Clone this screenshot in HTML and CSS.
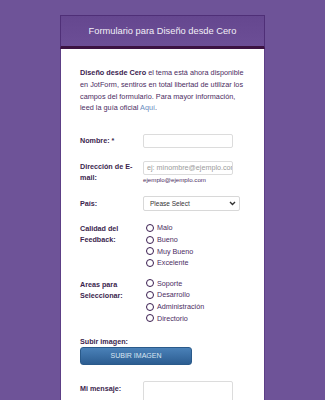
FILE: index.html
```html
<!DOCTYPE html>
<html lang="es">
<head>
    <meta charset="UTF-8">
    <meta name="viewport" content="width=device-width, initial-scale=1.0">
    <title>Formulario para Diseño desde Cero</title>
    <link rel="stylesheet" href="styles.css">
</head>
<body>

    <div class="card">
        <div class="card-header">Formulario para Diseño desde Cero</div>

        <div class="card-body">
            <p class="intro"><b>Diseño desde Cero</b> el tema está ahora disponible en JotForm, sentiros en total libertad de utilizar los campos del formulario. Para mayor información, leed la guía oficial <a href="#">Aquí</a>.</p>

            <div class="row row-name">
                <label class="label">Nombre: *</label>
                <div class="field"><div class="input"></div></div>
            </div>

            <div class="row row-email">
                <label class="label">Dirección de E-mail:</label>
                <div class="field">
                    <div class="input placeholder">ej: minombre@ejemplo.com</div>
                    <div class="hint">ejemplo@ejemplo.com</div>
                </div>
            </div>

            <div class="row row-country">
                <label class="label">País:</label>
                <div class="field">
                    <div class="select">
                        <span>Please Select</span>
                        <svg width="7" height="5" viewBox="0 0 7 5"><path d="M1 1 L3.5 3.5 L6 1" fill="none" stroke="#333" stroke-width="1.4"/></svg>
                    </div>
                </div>
            </div>

            <div class="row row-feedback">
                <label class="label">Calidad del Feedback:</label>
                <div class="field options">
                    <div class="option"><span class="radio"></span>Malo</div>
                    <div class="option"><span class="radio"></span>Bueno</div>
                    <div class="option"><span class="radio"></span>Muy Bueno</div>
                    <div class="option"><span class="radio"></span>Excelente</div>
                </div>
            </div>

            <div class="row row-areas">
                <label class="label">Areas para Seleccionar:</label>
                <div class="field options">
                    <div class="option"><span class="radio"></span>Soporte</div>
                    <div class="option"><span class="radio"></span>Desarrollo</div>
                    <div class="option"><span class="radio"></span>Administración</div>
                    <div class="option"><span class="radio"></span>Directorio</div>
                </div>
            </div>

            <div class="upload">
                <label class="label">Subir imagen:</label>
                <button class="upload-btn">SUBIR IMAGEN</button>
            </div>

            <div class="row row-message">
                <label class="label">Mi mensaje:</label>
                <div class="field"><div class="textarea"></div></div>
            </div>
        </div>
    </div>

</body>
</html>
```

FILE: styles.css
```css
body {
    margin: 0;
    padding: 15px 0 0;
    background-color: #6e5398;
    font-family: "Liberation Sans", Arial, sans-serif;
    color: #4a2d5e;
    height: 400px;
    overflow: hidden;
}

.card {
    width: 203px;
    margin: 0 auto;
    border-left: 1px solid #5d3f86;
    border-right: 1px solid #5d3f86;
    background-color: #fff;
    height: 400px;
}

.card-header {
    height: 30px;
    line-height: 31px;
    margin: 0 -1px;
    border: 1px solid #4f2f77;
    border-bottom: 3px solid #3c1242;
    background: linear-gradient(#65478f, #6c4e96);
    color: #f2eef7;
    font-size: 9.3px;
    text-align: center;
}

.card-body {
    padding: 18px 16px 0 19px;
}

.intro {
    margin: 0;
    font-size: 7.3px;
    line-height: 11.8px;
    color: #4b2c5f;
}

.intro b {
    color: #3c1c50;
}

.intro a {
    color: #6a8ec0;
    text-decoration: none;
}

.row {
    display: flex;
}

.label {
    width: 63px;
    flex-shrink: 0;
    font-size: 7.2px;
    font-weight: bold;
    line-height: 11px;
    color: #3c1f4e;
}

.field {
    flex: 1;
}

.row-name {
    margin-top: 20px;
}

.row-name .label {
    padding-top: 1px;
}

.row-email {
    margin-top: 13px;
}

.row-country {
    margin-top: 13px;
}

.row-country .label {
    padding-top: 2px;
}

.row-feedback {
    margin-top: 11px;
}

.row-feedback .label,
.row-areas .label {
    padding-top: 1px;
}

.row-areas {
    margin-top: 9px;
}

.input {
    width: 88px;
    height: 12px;
    border: 1px solid #dcdcdc;
    border-radius: 2px;
    box-sizing: content-box;
}

.placeholder {
    font-size: 7.2px;
    line-height: 12px;
    color: #9a9a9a;
    padding-left: 3px;
    width: 85px;
    white-space: nowrap;
    overflow: hidden;
}

.hint {
    margin-top: 1px;
    font-size: 6.2px;
    line-height: 7px;
    color: #4b2c5f;
}

.select {
    width: 86px;
    height: 13px;
    border: 1px solid #d8d8d8;
    border-radius: 2px;
    padding: 0 3px 0 6px;
    display: flex;
    align-items: center;
    justify-content: space-between;
    font-size: 6.5px;
    color: #333;
}

.options {
    padding-left: 3px;
}

.option {
    display: flex;
    align-items: center;
    height: 11.6px;
    font-size: 7.2px;
    color: #4b2c5f;
}

.radio {
    width: 6px;
    height: 6px;
    border: 1.5px solid #3a1d50;
    border-radius: 50%;
    margin-right: 3px;
    flex-shrink: 0;
}

.upload {
    margin-top: 12px;
}

.upload .label {
    display: block;
    width: auto;
}

.upload-btn {
    display: block;
    margin-top: 0;
    width: 112px;
    height: 18px;
    border: 1px solid #2a5a8a;
    border-radius: 3px;
    background: linear-gradient(#4a81b8, #2c5d91);
    color: #dbe6f2;
    font-family: "Liberation Sans", Arial, sans-serif;
    font-size: 7px;
    padding: 0;
}

.row-message {
    margin-top: 16px;
}

.row-message .label {
    padding-top: 2px;
}

.textarea {
    width: 88px;
    height: 40px;
    border: 1px solid #dcdcdc;
    border-radius: 2px;
}
```
